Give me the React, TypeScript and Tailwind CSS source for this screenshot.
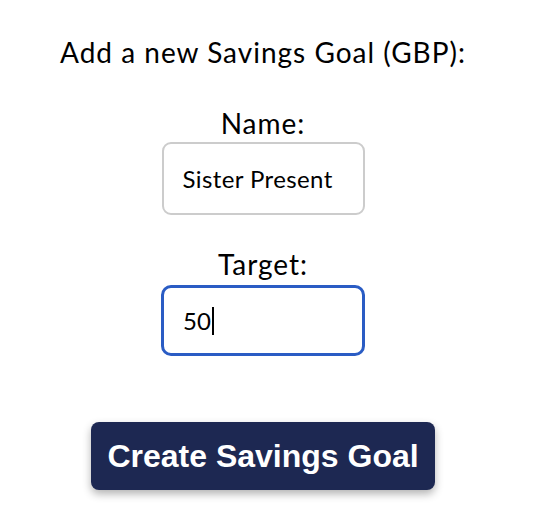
export default function App() {
  const gill = { fontFamily: '"Gill Sans", Lato, "Open Sans", sans-serif' };
  return (
    <div className="w-[534px] h-[524px] bg-white">
      <div className="w-[526px] flex flex-col items-center pt-[36px]" style={gill}>
        <h1 className="text-[28px] leading-[32px] tracking-[1px] text-black font-normal m-0">
          Add a new Savings Goal (GBP):
        </h1>
        <label className="mt-[39px] text-[28px] leading-[32px] tracking-[1px] text-black">Name:</label>
        <div className="mt-[3px] w-[203px] h-[73px] rounded-[9px] border-2 border-[#cccccc] flex items-center pl-[19px] text-[24px] tracking-[0.4px] text-black">
          Sister Present
        </div>
        <label className="mt-[33px] text-[28px] leading-[32px] tracking-[1px] text-black">Target:</label>
        <div className="mt-[5px] w-[204px] h-[71px] rounded-[10px] border-[3px] border-[#2a5cc4] flex items-center pl-[19px] text-[24px] text-black">
          50<span className="inline-block w-[2px] h-[28px] bg-black ml-[1px]" />
        </div>
        <button
          className="mt-[66px] w-[344px] h-[68px] rounded-[8px] bg-[#1d2852] text-white text-[32px] font-bold shadow-[0_4px_8px_rgba(0,0,0,0.3)]"
          style={{ fontFamily: '"Liberation Sans", Arial, sans-serif' }}
        >
          Create Savings Goal
        </button>
      </div>
    </div>
  );
}
